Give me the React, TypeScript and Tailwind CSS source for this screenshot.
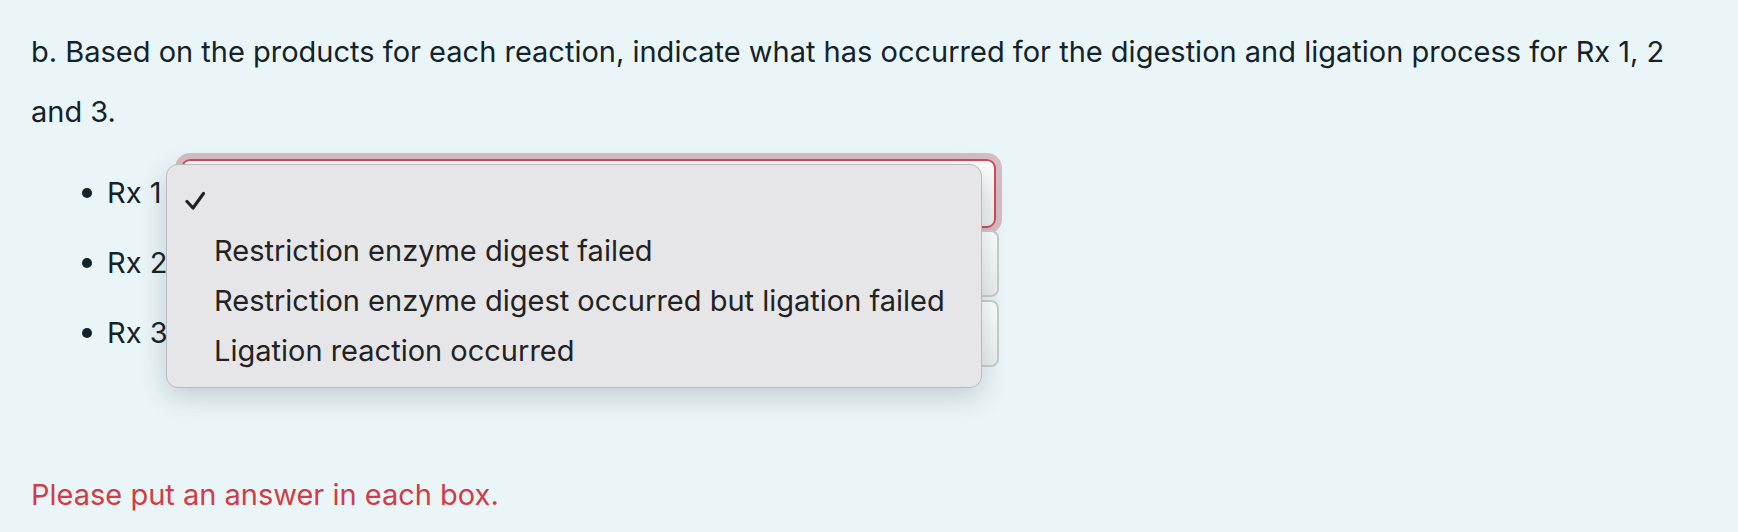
const ROWS = ["Rx 1", "Rx 2", "Rx 3"];

const OPTIONS = [
  "Restriction enzyme digest failed",
  "Restriction enzyme digest occurred but ligation failed",
  "Ligation reaction occurred",
];

function SelectBox({ focused }: { focused?: boolean }) {
  return (
    <div
      className={
        focused
          ? "h-[69px] w-[815px] rounded-[9px] border-2 border-[#d04a5b] bg-gradient-to-b from-white to-[#efefef] shadow-[0_0_0_6px_#d8bcc3]"
          : "h-[67px] w-[818px] rounded-[8px] border-2 border-[#c9cccf] bg-gradient-to-b from-white to-[#ededed]"
      }
    />
  );
}

export default function App() {
  return (
    <div className="relative min-h-screen bg-[#eaf5f7] pl-[31px] pr-[50px] pt-[22px] font-['Inter','Liberation_Sans',sans-serif] text-[29px] text-[#13222b]">
      <p className="leading-[60px]">
        b. Based on the products for each reaction, indicate what has occurred for the digestion and ligation process for Rx 1, 2
        and 3.
      </p>

      <ul className="mt-[16px] pl-[51px]">
        {ROWS.map((label, i) => (
          <li key={label} className="flex h-[70px] items-center">
            <span className="mr-[15px] h-[10px] w-[10px] shrink-0 rounded-full bg-[#13222b]" />
            <span className="w-[74px] shrink-0 whitespace-nowrap">{label}</span>
            <SelectBox focused={i === 0} />
          </li>
        ))}
      </ul>

      <p className="mt-[97px] leading-[60px] text-[#d13c46]">Please put an answer in each box.</p>

      {/* native select popup, open over the first box */}
      <div className="absolute left-[166px] top-[164px] w-[816px] rounded-[12px] border border-[#b9bcbf] bg-[#e6e6e8] py-[11px] text-[#222] shadow-[0_8px_28px_rgba(40,60,70,0.22)]">
        <div className="flex h-[50px] items-center pl-[18px]">
          <svg width="20" height="20" viewBox="0 0 20 20" fill="none" aria-hidden="true">
            <path d="M2 10.5 8 17 18.5 2.5" stroke="#222" strokeWidth="3.2" strokeLinecap="round" strokeLinejoin="round" />
          </svg>
        </div>
        {OPTIONS.map((opt) => (
          <div key={opt} className="flex h-[50px] items-center pl-[47px] whitespace-nowrap">
            {opt}
          </div>
        ))}
      </div>
    </div>
  );
}
